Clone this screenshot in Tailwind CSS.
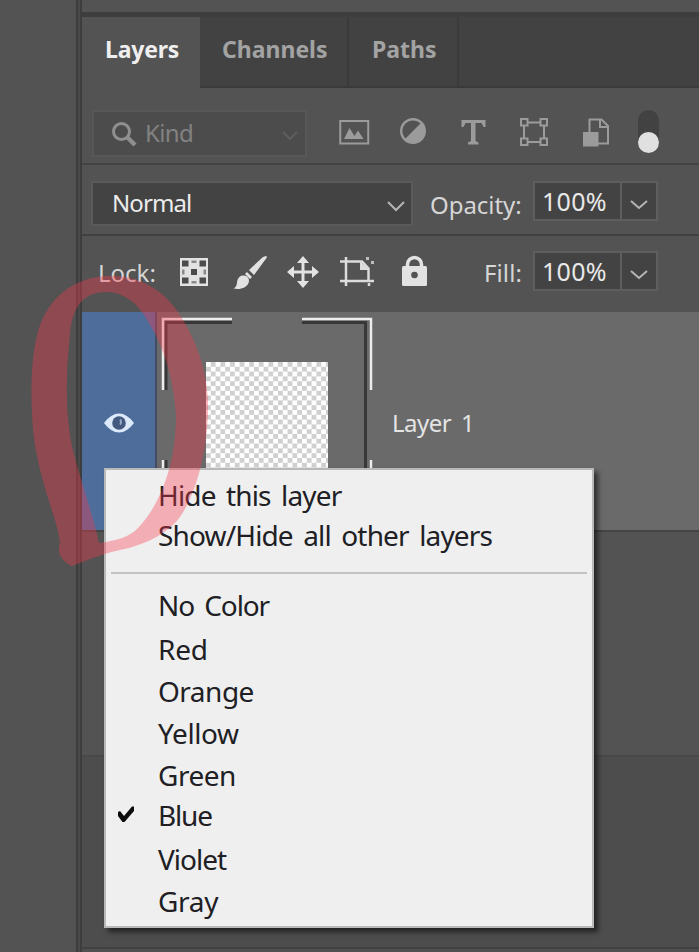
<!DOCTYPE html>
<html lang="en">
<head>
    <meta charset="UTF-8">
    <meta name="viewport" content="width=device-width, initial-scale=1.0">
    <title>Layers panel</title>
    <script src="https://cdn.jsdelivr.net/npm/@tailwindcss/browser@4"></script>
</head>
<body class="relative w-[699px] h-[952px] overflow-hidden bg-[#535353] font-['Noto_Sans',sans-serif] text-[#d6d6d6]">

<div class="flex h-full">
    <!-- Left gutter -->
    <div class="w-[76px] shrink-0"></div>
    <div class="w-[6px] shrink-0 border-l-2 border-r-2 border-[#3d3d3d] bg-[#4a4a4a]"></div>

    <!-- Panel -->
    <div class="flex-1 min-w-0 flex flex-col">
        <div class="h-[12px] shrink-0"></div>
        <div class="h-[5px] shrink-0 bg-[#3e3e3e]"></div>

        <!-- Tabs -->
        <div class="flex h-[71px] shrink-0 bg-[#424242] text-[23px] leading-[64px] font-bold text-[#a3a3a3] whitespace-nowrap">
            <div class="w-[118px] pl-[23px] bg-[#535353] text-[#efefef]"><span class="tracking-[-0.2px]">Layers</span></div>
            <div class="w-[149px] pl-[22px] border-r-2 border-b-2 border-[#3a3a3a]"><span class="tracking-[0px]">Channels</span></div>
            <div class="w-[110px] pl-[23px] border-r-2 border-b-2 border-[#3a3a3a]"><span class="tracking-[0px]">Paths</span></div>
            <div class="flex-1 border-b-2 border-[#3a3a3a]"></div>
        </div>

        <!-- Filter row -->
        <div class="flex h-[77px] shrink-0 pl-[10px] pt-[22px] border-b-2 border-[#434343]">
            <div class="flex items-center w-[215px] h-[47px] border-2 border-[#575757] bg-[#4c4c4c] pl-[17px] pr-[6px] text-[#828282]">
                <svg class="w-[26px] h-[26px]" viewBox="0 0 26 26" fill="none" stroke="#8f8f8f"><circle cx="10.5" cy="10.5" r="8" stroke-width="3"/><path d="M16 16l8 8" stroke-width="4.5"/></svg>
                <span class="ml-[8px] -mt-[2px] text-[24px] leading-[30px] tracking-[-0.6px]">Kind</span>
                <svg class="ml-auto w-[18px] h-[12px] mt-[4px]" viewBox="0 0 18 12" fill="none" stroke="#5e5e5e" stroke-width="2"><path d="M2 2l7 7 7-7"/></svg>
            </div>
            <svg class="ml-[31px] mt-[9px] w-[32px] h-[26px]" viewBox="0 0 32 26"><rect x="2.25" y="2" width="28" height="22.5" fill="none" stroke="#9b9b9b" stroke-width="2"/><path d="M6 20l5.500-11 5 8 3.500-5.500 5.500 8.500z" fill="#9b9b9b"/></svg>
            <svg class="ml-[29px] mt-[7px] w-[28px] h-[28px]" viewBox="0 0 28 28"><circle cx="14" cy="14" r="11.800" fill="none" stroke="#9b9b9b" stroke-width="2.400"/><path d="M22.500 5.500A12 12 0 0 1 5.500 22.500z" fill="#9b9b9b"/></svg>
            <svg class="ml-[34px] mt-[9px] w-[25px] h-[26px]" viewBox="0 0 25 26" fill="#9b9b9b"><path d="M0.500 1h24v7h-2l-2-4h-6v18l3 1.500v2H7v-2l3-1.500V4H4.500l-2 4h-2z"/></svg>
            <svg class="ml-[33px] mt-[7px] w-[30px] h-[30px]" viewBox="0 0 30 30" fill="none" stroke="#9b9b9b" stroke-width="2"><path d="M8 5.500h14M8 25h14M5 9v13M25 9v13"/><rect x="2" y="2" width="6.500" height="6.500"/><rect x="21.500" y="2" width="6.500" height="6.500"/><rect x="2" y="21.500" width="6.500" height="6.500"/><rect x="21.500" y="21.500" width="6.500" height="6.500"/></svg>
            <svg class="ml-[33px] mt-[7px] w-[28px] h-[31px]" viewBox="0 0 28 31"><path d="M7.500 15V2.500h12l6.500 6.500v17.500h-10M18 2.500V10h8" fill="none" stroke="#9b9b9b" stroke-width="2"/><path d="M1 15h15.500v14.500H1z" fill="#9b9b9b"/></svg>
            <!-- Filter toggle -->
            <div class="flex items-end ml-[28px] w-[21px] h-[43px] rounded-full bg-[#424242]">
                <div class="w-[21px] h-[21px] rounded-full bg-[#e0e0e0]"></div>
            </div>
        </div>

        <!-- Blend mode row -->
        <div class="flex h-[71px] shrink-0 pl-[9px] pt-[16px] border-b-2 border-[#414141]">
            <div class="flex items-center justify-between w-[322px] h-[45px] border-2 border-[#5a5a5a] bg-[#434343] pl-[19px] pr-[6px] text-[#ececec]">
                <span class="text-[24px] leading-[30px] tracking-[-0.9px] -mt-px">Normal</span>
                <svg class="w-[18px] h-[12px] mt-[5px]" viewBox="0 0 18 12" fill="none" stroke="#b5b5b5" stroke-width="2"><path d="M1 2l8 8 8-8"/></svg>
            </div>
            <span class="w-[92px] ml-[17px] mt-[9px] text-[24px] leading-[30px] tracking-[-0.05px]">Opacity:</span>
            <div class="flex ml-[11px] w-[125px] h-[40px] border-2 border-[#5e5e5e] bg-[#434343] text-[#e8e8e8]">
                <span class="w-[87px] pl-[7px] border-r-2 border-[#5e5e5e] text-[25px] leading-[36px] tracking-[0.3px]">100%</span>
                <svg class="m-auto w-[18px] h-[12px] translate-y-[4px]" viewBox="0 0 18 12" fill="none" stroke="#b5b5b5" stroke-width="2"><path d="M1 2l8 7 8-7"/></svg>
            </div>
        </div>

        <!-- Lock row -->
        <div class="flex h-[76px] shrink-0 pl-[16px] pt-[15px]">
            <span class="w-[60px] mt-[7px] text-[24px] leading-[30px] tracking-[0px]">Lock:</span>
            <svg class="ml-[21px] mt-[6px] w-[30px] h-[30px]" viewBox="0 0 30 30"><path d="M1 1h28v28H1z" fill="#e2e2e2"/><path d="M3 3.500h6.500v6H3zM20.500 3.500H27v6h-6.500zM12 12h6v6h-6zM3 20.500h6.500v6H3zM20.500 20.500H27v6h-6.500z" fill="#4b4b4b"/><path d="M12.500 3.500h5v2.500h-5zM3 12.500h2.500v5H3zM24.500 12.500H27v5h-2.500zM12.500 24h5v2.500h-5z" fill="#8a8a8a"/></svg>
            <svg class="ml-[23px] mt-[4px] w-[36px] h-[36px]" viewBox="0 0 36 36" fill="#e2e2e2"><path d="M34 1c1 0 1 1 .5 2L22 20l-5-5L31 2zM15 17l5 5-2 2-5-5zM12 20.500c4 .5 6 4 4.500 7.500-2 5-8.500 7-15 5.500 4-2 3-5 4-8.500 1-3 3.500-5 6.500-4.500z"/></svg>
            <svg class="ml-[18px] mt-[4px] w-[34px] h-[34px]" viewBox="0 0 34 34" fill="#e2e2e2"><path d="M17 1l6 7h-4.500v7.500H26V11l7 6-7 6v-4.500h-7.500V26H23l-6 7-6-7h4.500v-7.500H8V23l-7-6 7-6v4.500h7.500V8H11z"/></svg>
            <svg class="ml-[19px] mt-[5px] w-[36px] h-[32px]" viewBox="0 0 36 32"><path d="M7 1v4M7 25v5M30 27v3M1 5.500h22l6.500 7v12M7 5.500v19M1 25h34" fill="none" stroke="#dcdcdc" stroke-width="2.500"/><path d="M21 5l9 9h-9z" fill="#dcdcdc"/><path d="M27 1h3v3h-3zM32 5h3v3h-3z" fill="#bdbdbd"/></svg>
            <svg class="ml-[26px] mt-[4px] w-[27px] h-[33px]" viewBox="0 0 27 33"><path d="M6.500 12V9.500a7 7 0 0 1 14 0v2.500" fill="none" stroke="#e2e2e2" stroke-width="3.500"/><rect x="1" y="11" width="25" height="20" rx="1.500" fill="#e2e2e2"/><circle cx="13.500" cy="20" r="3.300" fill="#535353"/></svg>
            <span class="w-[40px] ml-[56px] mt-[7px] text-[24px] leading-[30px] tracking-[0.1px]">Fill:</span>
            <div class="flex ml-[9px] w-[125px] h-[40px] border-2 border-[#5e5e5e] bg-[#434343] text-[#e8e8e8]">
                <span class="w-[87px] pl-[7px] border-r-2 border-[#5e5e5e] text-[25px] leading-[36px] tracking-[0.3px]">100%</span>
                <svg class="m-auto w-[18px] h-[12px] translate-y-[4px]" viewBox="0 0 18 12" fill="none" stroke="#b5b5b5" stroke-width="2"><path d="M1 2l8 7 8-7"/></svg>
            </div>
        </div>

        <!-- Layer 1 -->
        <div class="flex h-[220px] shrink-0 bg-[#6a6a6a] border-b-2 border-[#454545]">
            <div class="w-[75px] bg-[#4e6d9b] border-r-2 border-[#434c60] pt-[100px] pl-[21px]">
                <svg class="w-[32px] h-[22px]" viewBox="0 0 32 22"><path d="M1 11Q8 1.500 16 1.500T31 11Q24 20.500 16 20.500T1 11z" fill="#dce9fb"/><circle cx="16" cy="11" r="6.800" fill="#44597e"/><path d="M17 7.500a3.500 3.500 0 0 1 0 5" fill="none" stroke="#93a9cc" stroke-width="2"/></svg>
            </div>
            <svg class="ml-[4px] mt-[5px] w-[212px] h-[213px]" viewBox="161 317 212 213">
                <defs>
                    <pattern id="checker" x="206" y="362" width="9.600" height="9.600" patternUnits="userSpaceOnUse"><path d="M0 0h9.600v9.600H0z" fill="#fff"/><path d="M4.800 0h4.800v4.800H4.800zM0 4.800h4.800v4.800H0z" fill="#d0d0d0"/></pattern>
                </defs>
                <path d="M166 390v-67.500h66M302 322.500h63.500V530M166 460v70" fill="none" stroke="#383838" stroke-width="3"/>
                <path d="M163 390v-71h69M302 319h69v71M163 460v70M371 460v70" fill="none" stroke="#ececec" stroke-width="2.500"/>
                <path d="M206 362h122v122H206z" fill="url(#checker)"/>
            </svg>
            <span class="ml-[19px] mt-[96px] text-[24px] leading-[30px] tracking-[-0.5px] [word-spacing:4px] text-[#e4e4e4]">Layer 1</span>
        </div>

        <div class="h-[225px] shrink-0 border-b-2 border-[#484848]"></div>
        <div class="h-[192px] shrink-0 bg-[#4d4d4d] border-b-2 border-[#424242]"></div>
        <div class="flex-1 bg-[#505050]"></div>
    </div>
</div>

<!-- Context menu -->
<div class="absolute left-[104px] top-[468px] w-[490px] h-[460px] border-2 border-[#b9b9b9] bg-[#efefef] shadow-[4px_4px_5px_rgba(0,0,0,0.55)] text-[28px] leading-[42px] tracking-[-0.85px] [word-spacing:4px] text-[#202024] whitespace-nowrap">
    <div class="pl-[52px] pt-[4px]">
        <div class="h-[40px]">Hide this layer</div>
        <div class="h-[40px]">Show/Hide all other layers</div>
    </div>
    <div class="mx-[5px] mt-[18px] h-[2px] bg-[#c2c2c2]"></div>
    <div class="pl-[52px] pt-[10px]">
        <div class="h-[44px] tracking-[-1.1px]">No Color</div>
        <div class="h-[42px] tracking-[-0.2px]">Red</div>
        <div class="h-[42px] tracking-[-0.5px]">Orange</div>
        <div class="h-[42px] tracking-[-0.4px]">Yellow</div>
        <div class="h-[40px] tracking-[-0.5px]">Green</div>
        <div class="flex h-[44px] -ml-[41px]">
            <svg class="mt-[11px] mr-[23px] w-[18px] h-[19px]" viewBox="0 0 18 19"><path d="M1 7l2-1 4 5L15 1.500h2V6L7.500 17H5.500L1 11z" fill="#0c0c0c"/></svg>
            <span class="tracking-[-1.2px]">Blue</span>
        </div>
        <div class="h-[42px] tracking-[-1px]">Violet</div>
        <div class="h-[42px] tracking-[-0.3px]">Gray</div>
    </div>
</div>

<!-- Red marker stroke -->
<svg class="absolute left-0 top-0 w-[699px] h-[952px] pointer-events-none" viewBox="0 0 699 952">
    <path d="M72 566C62 562 56 552 60 543C58 520 38 480 33 430C30 390 31 350 40 325C52 294 76 278 106 276C135 274 162 288 178 312C195 338 206 365 208 400C209 440 200 485 182 514C172 530 150 544 120 550C102 554 88 560 72 566zM99 543C115 541 130 537 138 528C160 505 176 465 176 415C174 385 166 350 150 325C140 305 125 292 106 292C85 292 72 305 70 335C64 390 67 430 75 458C82 485 93 515 99 543z" fill="rgb(250,55,75)" fill-opacity="0.36" fill-rule="evenodd"/>
</svg>

</body>
</html>
